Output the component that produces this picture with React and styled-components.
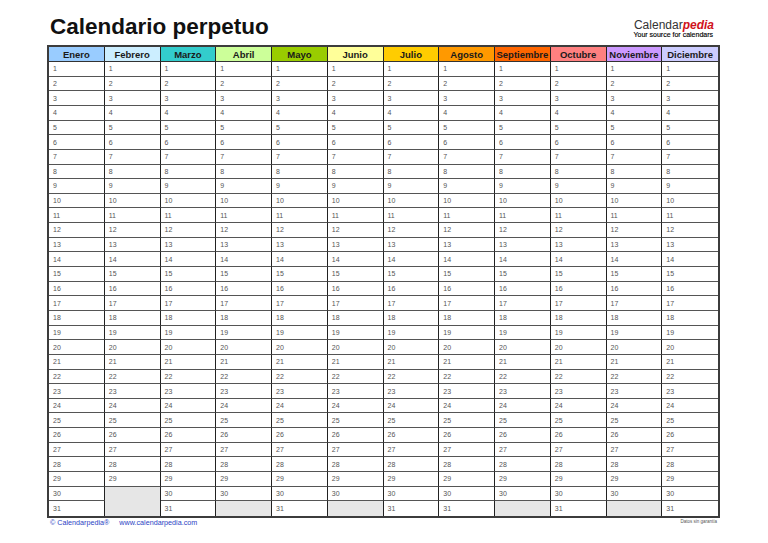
import React from "react";
import styled, { createGlobalStyle } from "styled-components";

const Global = createGlobalStyle`
  html, body { margin: 0; padding: 0; background: #fff; }
  body { font-family: "Liberation Sans", Arial, sans-serif; }
`;

const Page = styled.div`
  width: 768px;
  height: 543px;
  background: #fff;
  display: flex;
  flex-direction: column;
`;

const TopBar = styled.header`
  height: 45px;
  display: flex;
  justify-content: space-between;
  align-items: flex-end;
  padding: 0 54px 0 50px;
  box-sizing: border-box;
`;

const Title = styled.h1`
  margin: 0 0 5px 0;
  font-size: 22.5px;
  line-height: 26px;
  font-weight: 700;
  color: #111;
  letter-spacing: 0;
`;

const Logo = styled.div`
  display: flex;
  flex-direction: column;
  align-items: flex-end;
  margin-bottom: 6px;
`;

const LogoName = styled.div`
  font-size: 12px;
  line-height: 12px;
  color: #333;
  white-space: nowrap;
`;

const LogoAccent = styled.span`
  color: #d0121b;
  font-weight: 700;
  font-style: italic;
`;

const Tagline = styled.div`
  font-size: 7px;
  line-height: 8px;
  color: #000;
  white-space: nowrap;
  margin-right: 1px;
  -webkit-text-stroke: 0.15px #000;
`;

const Table = styled.div`
  margin-left: 47px;
  width: 673px;
  height: 473px;
  box-sizing: border-box;
  border: 2px solid #3c3c3c;
  display: grid;
  grid-template-columns: repeat(12, 1fr);
  grid-template-rows: 15px repeat(31, 1fr);
`;

const HeadCell = styled.div`
  background: ${(p) => p.$bg};
  border-bottom: 1px solid #333;
  border-right: ${(p) => (p.$last ? "none" : "1px solid #222")};
  font-size: 9.5px;
  font-weight: 700;
  color: #1a1a1a;
  display: flex;
  align-items: center;
  justify-content: center;
  white-space: nowrap;
  overflow: hidden;
`;

const DayCell = styled.div`
  grid-row: ${(p) => (p.$span ? `span ${p.$span}` : "auto")};
  background: ${(p) => (p.$empty ? "#e6e6e6" : "#fff")};
  border-bottom: ${(p) => (p.$lastRow ? "none" : "1px solid #555")};
  border-right: ${(p) => (p.$last ? "none" : "1px solid #222")};
  font-size: 7px;
  color: #555;
  display: flex;
  align-items: center;
  padding-left: 4px;
  min-height: 0;
  overflow: hidden;
`;

const Footer = styled.footer`
  display: flex;
  justify-content: space-between;
  align-items: flex-start;
  padding: 0 51px 0 50px;
`;

const Copy = styled.div`
  font-size: 7.2px;
  line-height: 9px;
  color: #2b3fc4;
  display: flex;
  gap: 10px;
  white-space: nowrap;
`;

const Disclaimer = styled.div`
  font-size: 4.5px;
  line-height: 5px;
  margin-top: 1px;
  color: #555;
  white-space: nowrap;
`;

const months = [
  { name: "Enero", bg: "#99ccff", days: 31 },
  { name: "Febrero", bg: "#cceeff", days: 29 },
  { name: "Marzo", bg: "#33cccc", days: 31 },
  { name: "Abril", bg: "#ccff99", days: 30 },
  { name: "Mayo", bg: "#99cc00", days: 31 },
  { name: "Junio", bg: "#ffff99", days: 30 },
  { name: "Julio", bg: "#ffcc00", days: 31 },
  { name: "Agosto", bg: "#ff9900", days: 31 },
  { name: "Septiembre", bg: "#ff6600", days: 30 },
  { name: "Octubre", bg: "#ff8080", days: 31 },
  { name: "Noviembre", bg: "#cc99ff", days: 30 },
  { name: "Diciembre", bg: "#ccccff", days: 31 },
];

function buildCells() {
  const cells = [];
  for (let d = 1; d <= 31; d++) {
    months.forEach((m, i) => {
      const last = i === months.length - 1;
      const key = `${d}-${i}`;
      if (m.name === "Febrero" && d >= 30) {
        if (d === 30) {
          cells.push(<DayCell key={key} $empty $span={2} $lastRow $last={last} />);
        }
        return;
      }
      const empty = d > m.days;
      cells.push(
        <DayCell key={key} $empty={empty} $last={last} $lastRow={d === 31}>
          {empty ? "" : d}
        </DayCell>
      );
    });
  }
  return cells;
}

export default function App() {
  return (
    <>
      <Global />
      <Page>
        <TopBar>
          <Title>Calendario perpetuo</Title>
          <Logo>
            <LogoName>
              Calendar<LogoAccent>pedia</LogoAccent>
            </LogoName>
            <Tagline>Your source for calendars</Tagline>
          </Logo>
        </TopBar>
        <Table>
          {months.map((m, i) => (
            <HeadCell key={m.name} $bg={m.bg} $last={i === months.length - 1}>
              {m.name}
            </HeadCell>
          ))}
          {buildCells()}
        </Table>
        <Footer>
          <Copy>
            <span>© Calendarpedia®</span>
            <span>www.calendarpedia.com</span>
          </Copy>
          <Disclaimer>Datos sin garantía</Disclaimer>
        </Footer>
      </Page>
    </>
  );
}
